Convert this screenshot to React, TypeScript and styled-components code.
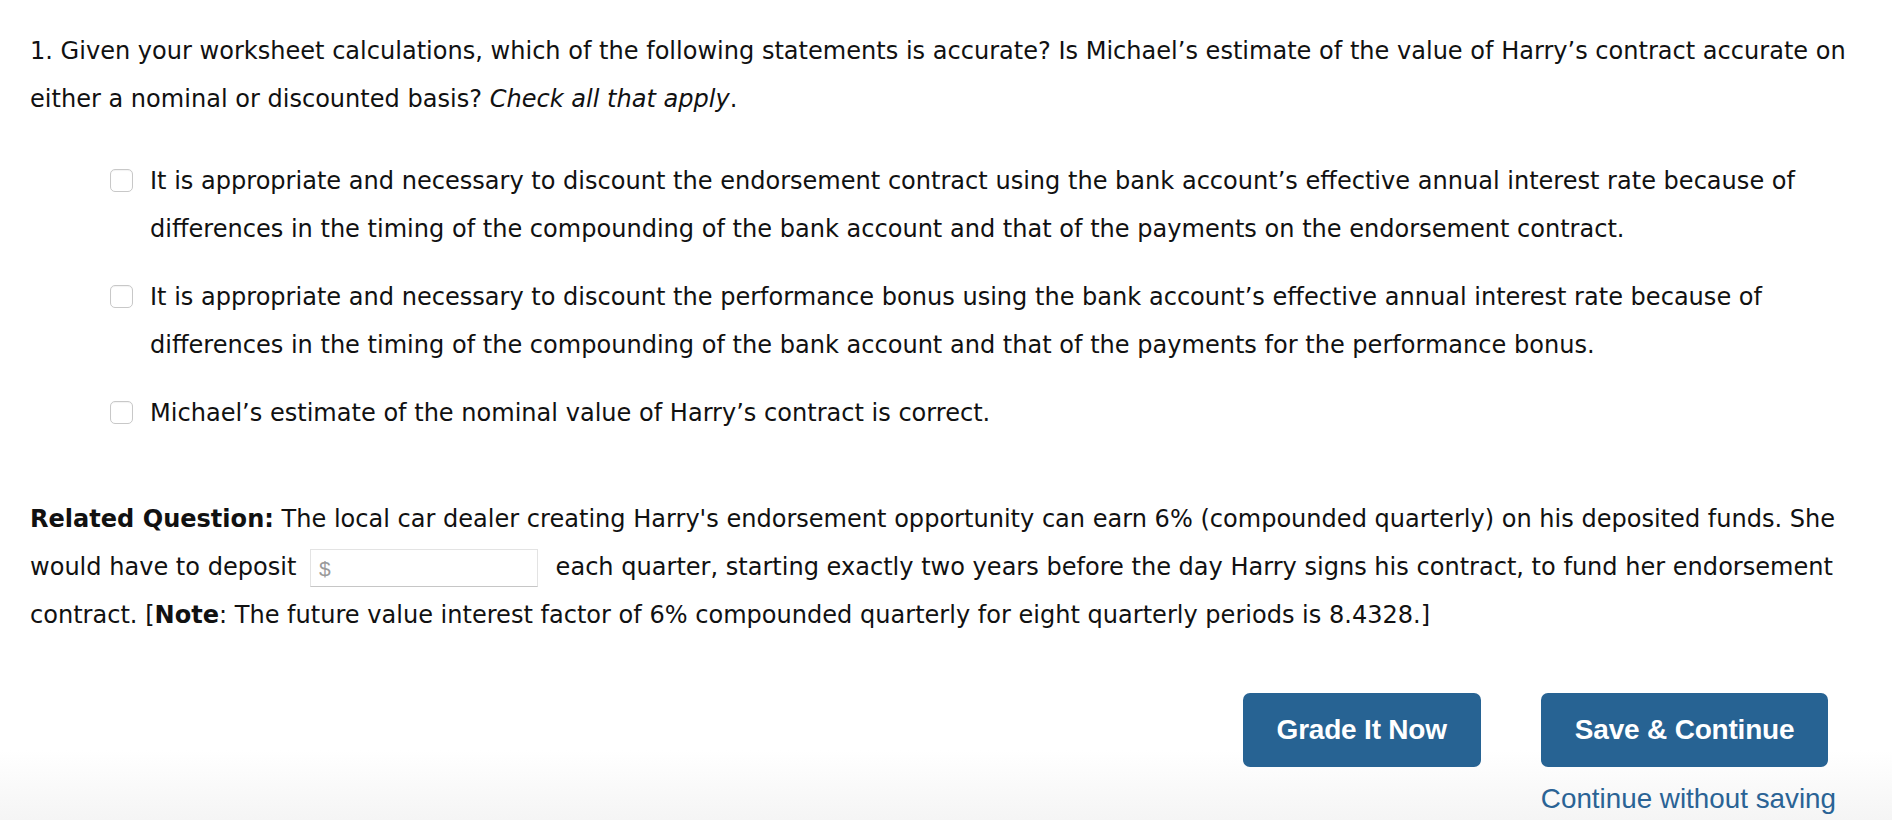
import React from "react";
import styled, { createGlobalStyle } from "styled-components";

const GlobalStyle = createGlobalStyle`
  html, body {
    margin: 0;
    padding: 0;
    background: #ffffff;
  }
  body {
    min-height: 820px;
    background: linear-gradient(to bottom, #ffffff 0px, #ffffff 750px, #f5f5f5 820px);
  }
`;

const Page = styled.div`
  box-sizing: border-box;
  width: 1892px;
  padding: 27px 40px 0 30px;
  font-family: "DejaVu Sans", Verdana, sans-serif;
  font-size: 24.05px;
  line-height: 48px;
  color: #111;
`;

const Paragraph = styled.p`
  margin: 0;
`;

const Options = styled.div`
  display: flex;
  flex-direction: column;
  gap: 20px;
  margin-top: 34px;
  padding-left: 80px;
`;

const OptionRow = styled.label`
  display: flex;
  align-items: flex-start;
  gap: 17px;
`;

const Box = styled.span`
  flex: 0 0 auto;
  box-sizing: border-box;
  width: 23px;
  height: 23px;
  margin-top: 12px;
  border: 1px solid #c8c8c8;
  border-radius: 5px;
  background: #fff;
  box-shadow: inset 0 1px 1px rgba(0, 0, 0, 0.05);
`;

const OptionText = styled.span`
  flex: 1 1 auto;
`;

const Related = styled(Paragraph)`
  margin-top: 58px;
`;

const MoneyInput = styled.span`
  display: inline-flex;
  align-items: center;
  box-sizing: border-box;
  width: 228px;
  height: 38px;
  margin: 0 10px 0 6px;
  padding: 0 8px;
  vertical-align: middle;
  border: 1px solid #e3e3e3;
  border-bottom-color: #c6c6c6;
  background: #fff;
  font-family: "Liberation Sans", Arial, sans-serif;
  font-size: 21px;
  color: #9a9a9a;
  line-height: 1;
`;

const Actions = styled.div`
  display: flex;
  justify-content: flex-end;
  align-items: flex-start;
  gap: 60px;
  margin-top: 54px;
  padding-right: 16px;
`;

const ActionColumn = styled.div`
  display: flex;
  flex-direction: column;
  align-items: flex-start;
`;

const Button = styled.button`
  box-sizing: border-box;
  height: 74px;
  padding: 0 34px;
  border: none;
  border-radius: 7px;
  background: #276393;
  color: #fff;
  font-family: "Liberation Sans", Helvetica, Arial, sans-serif;
  font-weight: 700;
  font-size: 28px;
  letter-spacing: -0.2px;
  cursor: pointer;
`;

const Link = styled.a`
  margin-top: 16px;
  font-family: "Liberation Sans", Helvetica, Arial, sans-serif;
  font-size: 27.8px;
  line-height: 32px;
  color: #2a6395;
  text-decoration: none;
  cursor: pointer;
`;

const options = [
  "It is appropriate and necessary to discount the endorsement contract using the bank account\u2019s effective annual interest rate because of differences in the timing of the compounding of the bank account and that of the payments on the endorsement contract.",
  "It is appropriate and necessary to discount the performance bonus using the bank account\u2019s effective annual interest rate because of differences in the timing of the compounding of the bank account and that of the payments for the performance bonus.",
  "Michael\u2019s estimate of the nominal value of Harry\u2019s contract is correct.",
];

export default function App() {
  return (
    <>
      <GlobalStyle />
      <Page>
        <Paragraph>
          1. Given your worksheet calculations, which of the following statements is accurate? Is
          Michael&rsquo;s estimate of the value of Harry&rsquo;s contract accurate on either a
          nominal or discounted basis? <em>Check all that apply</em>.
        </Paragraph>
        <Options>
          {options.map((t) => (
            <OptionRow key={t}>
              <Box />
              <OptionText>{t}</OptionText>
            </OptionRow>
          ))}
        </Options>
        <Related>
          <strong>Related Question:</strong> The local car dealer creating Harry's endorsement
          opportunity can earn 6% (compounded quarterly) on his deposited funds. She would have to
          deposit <MoneyInput>$</MoneyInput> each quarter, starting exactly two years before the day
          Harry signs his contract, to fund her endorsement contract. [<strong>Note</strong>: The
          future value interest factor of 6% compounded quarterly for eight quarterly periods is
          8.4328.]
        </Related>
        <Actions>
          <ActionColumn>
            <Button>Grade It Now</Button>
          </ActionColumn>
          <ActionColumn>
            <Button>Save &amp; Continue</Button>
            <Link>Continue without saving</Link>
          </ActionColumn>
        </Actions>
      </Page>
    </>
  );
}
